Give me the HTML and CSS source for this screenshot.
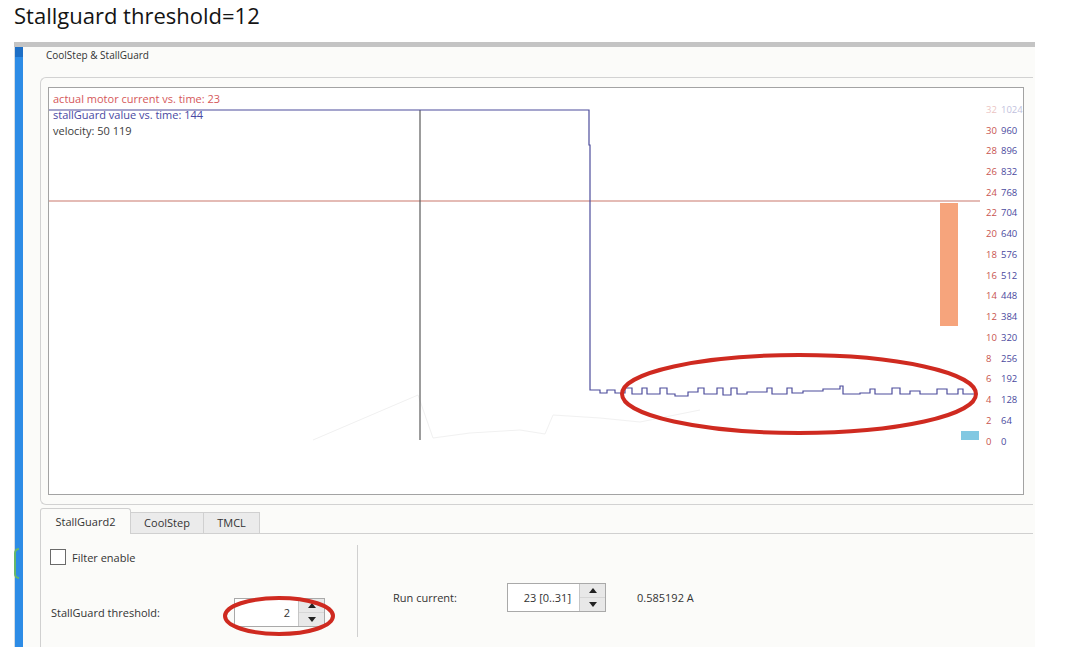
FILE: index.html
```html
<!DOCTYPE html>
<html lang="en">
<head>
    <meta charset="UTF-8">
    <meta name="viewport" content="width=device-width, initial-scale=1.0">
    <title>Stallguard threshold=12</title>
    <link rel="stylesheet" href="styles.css">
</head>
<body>
    <h1 class="title">Stallguard threshold=12</h1>

    <div class="shot">
        <div class="sidebar"><span class="grip"></span></div>

        <div class="window">
            <div class="caption">CoolStep &amp; StallGuard</div>

            <div class="group">
                <div class="chart">
                    <!-- chart drawn in page coordinates (viewBox = frame inner box) -->
                    <svg width="974" height="406" viewBox="49 88 974 406">
                        <polyline class="velocity" points="313,440 418,395 433,438 470,433 520,430 545,434 553,415 600,418 640,422 700,410"/>
                        <line class="current" x1="49" y1="201" x2="980" y2="201"/>
                        <line class="cursor" x1="420" y1="110" x2="420" y2="440"/>
                        <path class="stallguard" d="M49,110 H589 V145 H590 V390 H600 V393 H607 V390 H615 V393 H625 V388 H632 V394 H642 V388 H647 V394 H660 V388 H667 V394 H675 V396 H688 V392 H698 V388 H704 V394 H717 V388 H723 V395 H731 V388 H737 V394 H747 V392 H767 V388 H772 V394 H787 V388 H792 V393 H803 V391 H823 V389 H840 V386 H843 V394 H860 V393 H870 V389 H875 V394 H892 V388 H900 V394 H910 V391 H920 V394 H937 V389 H947 V394 H958 V389 H963 V394 H975 V391"/>

                        <rect class="bar-current" x="940" y="203" width="18" height="123"/>
                        <rect class="bar-sg" x="961" y="431" width="18" height="9"/>

                        <g class="legend">
                            <text class="l-current" x="53" y="103">actual motor current vs. time: 23</text>
                            <text class="l-sg" x="53" y="119">stallGuard value vs. time: 144</text>
                            <text class="l-vel" x="53" y="135">velocity: 50 119</text>
                        </g>

                        <g class="axis axis-current">
                            <text class="faded" x="986" y="112.5">32</text>
                            <text x="986" y="133.5">30</text>
                            <text x="986" y="154">28</text>
                            <text x="986" y="175">26</text>
                            <text x="986" y="195.5">24</text>
                            <text x="986" y="216">22</text>
                            <text x="986" y="237">20</text>
                            <text x="986" y="258">18</text>
                            <text x="986" y="278.5">16</text>
                            <text x="986" y="299">14</text>
                            <text x="986" y="320">12</text>
                            <text x="986" y="341">10</text>
                            <text x="986" y="361.5">8</text>
                            <text x="986" y="382">6</text>
                            <text x="986" y="403">4</text>
                            <text x="986" y="424">2</text>
                            <text x="986" y="444.5">0</text>
                        </g>
                        <g class="axis axis-sg">
                            <text class="faded" x="1001" y="112.5">1024</text>
                            <text x="1001" y="133.5">960</text>
                            <text x="1001" y="154">896</text>
                            <text x="1001" y="175">832</text>
                            <text x="1001" y="195.5">768</text>
                            <text x="1001" y="216">704</text>
                            <text x="1001" y="237">640</text>
                            <text x="1001" y="258">576</text>
                            <text x="1001" y="278.5">512</text>
                            <text x="1001" y="299">448</text>
                            <text x="1001" y="320">384</text>
                            <text x="1001" y="341">320</text>
                            <text x="1001" y="361.5">256</text>
                            <text x="1001" y="382">192</text>
                            <text x="1001" y="403">128</text>
                            <text x="1001" y="424">64</text>
                            <text x="1001" y="444.5">0</text>
                        </g>

                        <!-- hand-drawn annotation -->
                        <ellipse class="mark-line" cx="799" cy="394" rx="177" ry="39"/>
                    </svg>
                </div>
            </div>

            <div class="tabs">
                <div class="tab active">StallGuard2</div>
                <div class="tab tab-coolstep">CoolStep</div>
                <div class="tab tab-tmcl">TMCL</div>
                <div class="tab-fill"></div>
            </div>

            <div class="pane">
                <div class="col col-left">
                    <label class="check"><span class="box"></span>Filter enable</label>
                    <div class="field">
                        <span class="field-label label-threshold">StallGuard threshold:</span>
                        <div class="spin spin-threshold">
                            <span class="spin-value">2</span>
                            <span class="spin-buttons"><span class="up"></span><span class="down"></span></span>
                            <svg class="mark" width="116" height="48" viewBox="0 0 116 48">
                                <ellipse class="mark-line" cx="58" cy="24" rx="54" ry="18"/>
                            </svg>
                        </div>
                    </div>
                </div>

                <div class="col col-right">
                    <div class="field">
                        <span class="field-label label-run">Run current:</span>
                        <div class="spin spin-run">
                            <span class="spin-value">23 [0..31]</span>
                            <span class="spin-buttons"><span class="up"></span><span class="down"></span></span>
                        </div>
                        <span class="amps">0.585192 A</span>
                    </div>
                </div>
            </div>
        </div>
    </div>
</body>
</html>
```

FILE: styles.css
```css
body {
    margin: 0;
    width: 1080px;
    height: 647px;
    overflow: hidden;
    background: #fff;
    font-family: "Open Sans", "DejaVu Sans", sans-serif;
    color: #333;
}

.title {
    margin: 0;
    padding-left: 14px;
    height: 42px;
    font-size: 22px;
    font-weight: normal;
    line-height: 30px;
    color: #141414;
}

/* screenshot of the tool window */
.shot {
    display: flex;
    width: 1021px;
    height: 600px;
    margin-left: 14px;
    border-top: 5px solid #c4c4c4;
}

.sidebar {
    flex: none;
    width: 9px;
    box-sizing: border-box;
    border-left: 1px solid #d3dbe3;
    background: linear-gradient(#1d6fc6 0, #1d6fc6 10px, #2d8ce6 10px);
}

.grip {
    display: block;
    width: 3px;
    height: 27px;
    margin: 501px 0 0 -1px;
    border: 2px solid #66b86a;
    border-right: none;
    border-radius: 5px 0 0 5px;
}

.window {
    flex: 1;
    background: #fbfbf9;
}

.caption {
    height: 15px;
    padding: 1px 0 0 23px;
    margin-bottom: 14px;
    font-size: 10px;
    line-height: 14px;
    color: #333;
}

.group {
    margin: 0 2px 0 17px;
    padding: 9px 0 9px 7px;
    border: 1px solid #d2d2d2;
    border-right: none;
    border-radius: 6px 0 0 6px;
}

.chart {
    width: 976px;
    height: 408px;
    box-sizing: border-box;
    border: 1px solid #a3a3a3;
    background: #fff;
}

.chart svg {
    display: block;
}

.velocity {
    fill: none;
    stroke: #f1f1f1;
    stroke-width: 1;
}

.current {
    stroke: #c9786c;
    stroke-width: 1.2;
}

.cursor {
    stroke: #5a5a5a;
    stroke-width: 1.2;
}

.stallguard {
    fill: none;
    stroke: #4d4d9c;
    stroke-width: 1.2;
}

.bar-current {
    fill: #f6a47c;
}

.bar-sg {
    fill: #82c8e2;
}

.legend {
    font-size: 11px;
}

.l-current {
    fill: #d5585a;
}

.l-sg {
    fill: #4848a2;
}

.l-vel {
    fill: #3c3c3c;
}

.axis {
    font-size: 9.5px;
}

.axis-current {
    fill: #c8534e;
}

.axis-sg {
    fill: #4a4a9e;
}

.axis .faded {
    opacity: 0.35;
}

.mark-line {
    fill: none;
    stroke: #cf2a20;
    stroke-width: 4;
}

/* tab widget */
.tabs {
    display: flex;
    align-items: flex-end;
    height: 26px;
    margin: 3px 2px 0 17px;
}

.tab {
    box-sizing: border-box;
    height: 22px;
    margin-left: -1px;
    border: 1px solid #d0d0d0;
    background: #ebebeb;
    font-size: 11px;
    line-height: 20px;
    text-align: center;
}

.tab.active {
    width: 91px;
    height: 26px;
    margin-left: 0;
    border-bottom: none;
    border-radius: 3px 3px 0 0;
    background: #fbfbf9;
    line-height: 25px;
}

.tab-coolstep {
    width: 74px;
}

.tab-tmcl {
    width: 57px;
}

.tab-fill {
    flex: 1;
    border-bottom: 1px solid #d0d0d0;
}

.pane {
    display: flex;
    box-sizing: border-box;
    height: 113px;
    margin: 0 2px 0 17px;
    padding-top: 11px;
    border-left: 1px solid #d0d0d0;
    font-size: 11px;
}

.col-left {
    width: 317px;
    height: 92px;
    box-sizing: border-box;
    padding-left: 9px;
    border-right: 1px solid #d0d0d0;
}

.col-right {
    padding-left: 35px;
}

.check {
    display: flex;
    align-items: center;
    gap: 6px;
    height: 16px;
    margin-top: 4px;
}

.box {
    width: 16px;
    height: 16px;
    box-sizing: border-box;
    border: 1px solid #6a6a6a;
    background: #fff;
}

.field {
    display: flex;
    align-items: center;
}

.col-left .field {
    margin-top: 33px;
}

.col-right .field {
    margin-top: 38px;
}

.label-threshold {
    width: 183px;
    padding-left: 1px;
}

.label-run {
    width: 114px;
}

.spin {
    position: relative;
    display: flex;
    height: 29px;
    box-sizing: border-box;
    border: 1px solid #a9a9a9;
    background: #fff;
}

.spin-threshold {
    width: 91px;
}

.spin-run {
    width: 99px;
}

.spin-value {
    flex: 1;
    padding-right: 8px;
    line-height: 27px;
    text-align: right;
}

.spin-buttons {
    display: flex;
    flex-direction: column;
    width: 25px;
    border-left: 1px solid #c6c6c6;
    background: #e8e8e8;
}

.up,
.down {
    flex: 1;
    display: flex;
    align-items: center;
    justify-content: center;
}

.up {
    border-bottom: 1px solid #d6d6d6;
}

.up::before {
    content: "";
    border-left: 4px solid transparent;
    border-right: 4px solid transparent;
    border-bottom: 5px solid #222;
}

.down::before {
    content: "";
    border-left: 4px solid transparent;
    border-right: 4px solid transparent;
    border-top: 5px solid #222;
}

.mark {
    position: absolute;
    left: -14px;
    top: -7px;
    overflow: visible;
    pointer-events: none;
}

.amps {
    margin-left: 31px;
}
```
